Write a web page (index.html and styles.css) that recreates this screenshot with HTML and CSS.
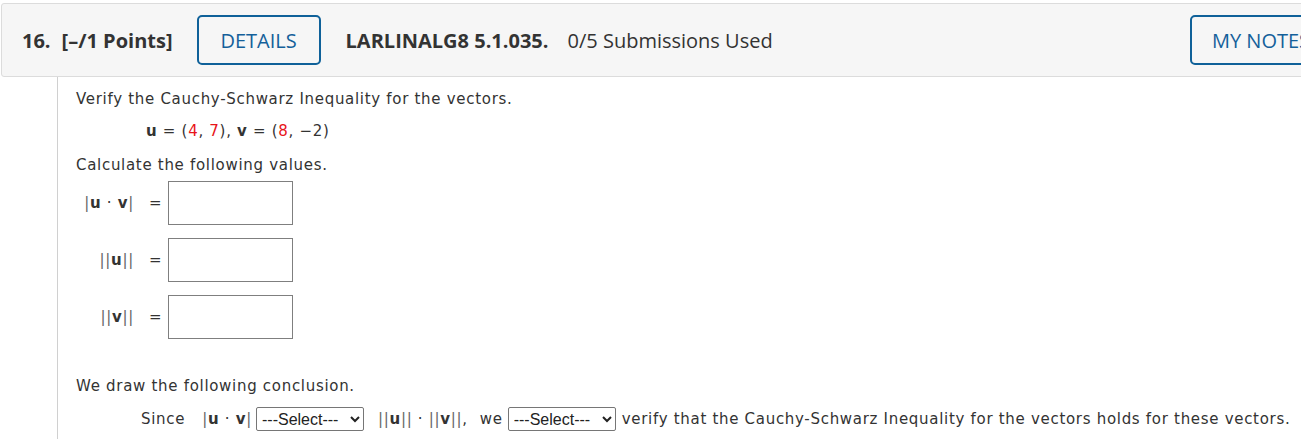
FILE: index.html
```html
<!DOCTYPE html>
<html>
<head>
<meta charset="utf-8">
<link rel="stylesheet" href="styles.css">
</head>
<body>
<div class="header">
  <span class="qnum">16.</span>
  <span class="points">[&ndash;/1 Points]</span>
  <button class="hbtn details">DETAILS</button>
  <span class="code">LARLINALG8 5.1.035.</span>
  <span class="subs">0/5 Submissions Used</span>
  <button class="hbtn notes">MY NOTES</button>
</div>
<div class="content">
  <p class="line first">Verify the Cauchy-Schwarz Inequality for the vectors.</p>
  <p class="line vec"><b>u</b> = (<span class="red">4</span>, <span class="red">7</span>), <b>v</b> = (<span class="red">8</span>, &minus;2)</p>
  <p class="line calc">Calculate the following values.</p>
  <div class="rows">
    <div class="row">
      <span class="lbl"><span class="bar">|</span><b>u</b> &middot; <b>v</b><span class="bar">|</span></span>
      <span class="eq">=</span>
      <input class="ans" type="text">
    </div>
    <div class="row">
      <span class="lbl"><span class="bar">||</span><b>u</b><span class="bar">||</span></span>
      <span class="eq">=</span>
      <input class="ans" type="text">
    </div>
    <div class="row">
      <span class="lbl"><span class="bar">||</span><b>v</b><span class="bar">||</span></span>
      <span class="eq">=</span>
      <input class="ans" type="text">
    </div>
  </div>
  <p class="line concl">We draw the following conclusion.</p>
  <div class="since">
    <span>Since</span>
    <span class="m"><span class="bar">|</span><b>u</b> &middot; <b>v</b><span class="bar">|</span></span>
    <select class="sel"><option>---Select---</option></select>
    <span class="m2"><span class="bar">||</span><b>u</b><span class="bar">||</span> &middot; <span class="bar">||</span><b>v</b><span class="bar">||</span>,</span>
    <span class="we">we</span>
    <select class="sel"><option>---Select---</option></select>
    <span class="tail">verify that the Cauchy-Schwarz Inequality for the vectors holds for these vectors.</span>
  </div>
</div>
</body>
</html>
```

FILE: styles.css
```css
html, body {
  margin: 0;
  padding: 0;
  background: #fff;
  overflow: hidden;
}
body {
  width: 1301px;
  height: 439px;
}
.header {
  margin: 3px 0 0 1px;
  width: 1330px;
  height: 72px;
  box-sizing: content-box;
  border: 1px solid #dcdcdc;
  border-radius: 3px;
  background: #f6f6f6;
  display: flex;
  align-items: center;
  font-family: "Open Sans", sans-serif;
  font-size: 20px;
  color: #333;
  white-space: nowrap;
}
.qnum {
  font-weight: 700;
  margin-left: 20px;
}
.points {
  font-weight: 700;
  margin-left: 11px;
}
.hbtn {
  font-family: "Open Sans", sans-serif;
  font-size: 20px;
  color: #14609a;
  background: transparent;
  border: 2px solid #0f6199;
  border-radius: 5px;
  height: 50px;
  padding: 0 20px;
  box-sizing: border-box;
}
.details {
  margin-left: 24px;
  width: 124px;
  padding: 0;
  text-align: center;
}
.code {
  font-weight: 700;
  margin-left: 25px;
}
.subs {
  margin-left: 19px;
}
.notes {
  margin-left: auto;
  margin-right: 2px;
  width: 140px;
  text-align: left;
}
.content {
  margin-left: 57px;
  border-left: 1px solid #d0d0d0;
  padding-left: 18px;
  height: 362px;
  font-family: "DejaVu Sans", Verdana, sans-serif;
  font-size: 15px;
  letter-spacing: 0.7px;
  color: #333;
}
.line {
  margin: 0;
}
.first {
  padding-top: 12px;
  line-height: 20px;
}
.vec {
  margin-top: 12px;
  margin-left: 70px;
  line-height: 20px;
}
.calc {
  margin-top: 14px;
  line-height: 20px;
}
b {
  font-weight: 700;
  color: #333;
}
.red {
  color: #e8141a;
}
.bar {
  color: #666;
  font-weight: 400;
}
.rows {
  margin-top: 6px;
  display: flex;
  flex-direction: column;
  gap: 13px;
}
.row {
  display: flex;
  align-items: center;
  height: 44px;
}
.lbl {
  width: 58px;
  text-align: right;
  white-space: nowrap;
}
.eq {
  margin-left: 15px;
  width: 19px;
}
.ans {
  width: 125px;
  height: 44px;
  box-sizing: border-box;
  border: 1px solid #7f7f7f;
  margin: 0;
  padding: 0;
  background: #fff;
}
.concl {
  margin-top: 37px;
  line-height: 20px;
}
.since {
  margin-top: 11px;
  margin-left: 65px;
  display: flex;
  align-items: center;
  white-space: nowrap;
  height: 24px;
}
.m {
  margin-left: 17px;
}
.sel {
  font-family: "Liberation Sans", Arial, sans-serif;
  font-size: 16px;
  letter-spacing: 0;
  color: #222;
  height: 24px;
  width: 108px;
  margin: 0 0 0 4px;
  border: 1px solid #767676;
  border-radius: 2px;
  background: #fff;
  padding: 0 1px;
}
.m2 {
  margin-left: 14px;
}
.we {
  margin-left: 12px;
}
.since .we + .sel {
  margin-left: 5px;
}
.tail {
  margin-left: 6px;
}
```
